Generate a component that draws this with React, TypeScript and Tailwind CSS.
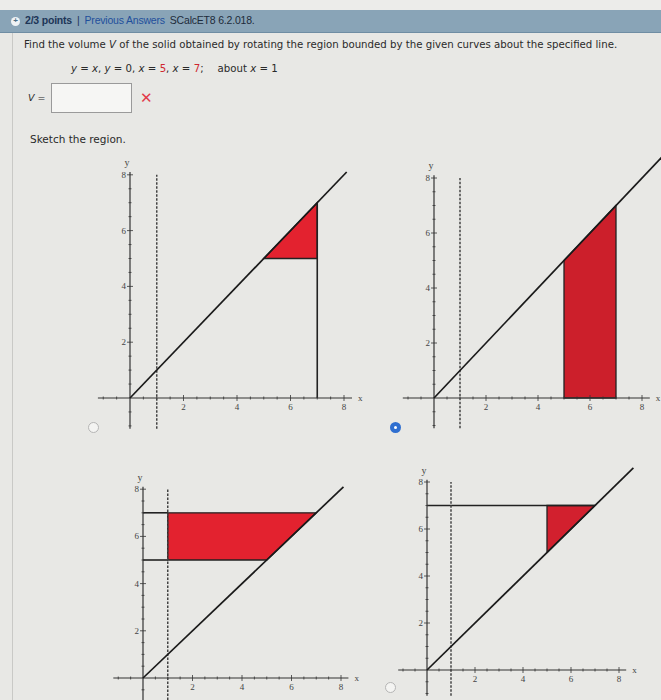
import React from 'react'

type Pt = [number, number]

interface GraphProps {
  w: number
  h: number
  ox: number
  oy: number
  ux: number
  uy: number
  xMin: number
  xMax: number
  yMin: number
  yMax: number
  lineEnd: number
  region: Pt[]
  fill?: string
  extra?: [Pt, Pt][]
}

function Graph({ w, h, ox, oy, ux, uy, xMin, xMax, yMin, yMax, lineEnd, region, fill = '#e3222f', extra = [] }: GraphProps) {
  const px = (x: number) => ox + x * ux
  const py = (y: number) => oy - y * uy
  const ticks: number[] = []
  for (let t = -1; t <= 8; t += 0.5) ticks.push(t)

  return (
    <svg width={w} height={h} className="block">
      {/* region */}
      <polygon
        points={region.map(([x, y]) => `${px(x)},${py(y)}`).join(' ')}
        fill={fill}
        stroke="#222"
        strokeWidth={1.3}
      />
      {extra.map(([a, b], i) => (
        <line key={i} x1={px(a[0])} y1={py(a[1])} x2={px(b[0])} y2={py(b[1])} stroke="#222" strokeWidth={1.6} />
      ))}

      {/* axes */}
      <line x1={px(xMin)} y1={oy} x2={px(xMax)} y2={oy} stroke="#333" strokeWidth={1.2} />
      <line x1={ox} y1={py(yMin)} x2={ox} y2={py(yMax)} stroke="#333" strokeWidth={1.2} />
      {ticks.map((t) =>
        t === 0 ? null : (
          <g key={t}>
            {t > xMin && t < xMax && (
              <line x1={px(t)} y1={oy - (t % 2 === 0 ? 3 : 1.5)} x2={px(t)} y2={oy + (t % 2 === 0 ? 3 : 1.5)} stroke="#333" strokeWidth={0.8} />
            )}
            {t > yMin && t <= yMax && (
              <line x1={ox - (t % 2 === 0 ? 3 : 1.5)} y1={py(t)} x2={ox + (t % 2 === 0 ? 3 : 1.5)} y2={py(t)} stroke="#333" strokeWidth={0.8} />
            )}
          </g>
        ),
      )}
      {[2, 4, 6, 8].map((n) => (
        <g key={n} fontFamily='"Liberation Serif", serif' fontSize={9} fill="#444">
          <text x={px(n)} y={oy + 12} textAnchor="middle">{n}</text>
          <text x={ox - 4} y={py(n) + 3} textAnchor="end">{n}</text>
        </g>
      ))}
      <text x={px(xMax) + 6} y={oy + 3} fontFamily='"Liberation Serif", serif' fontSize={9} fill="#444">x</text>
      <text x={ox - 3} y={py(yMax) - 6} fontFamily='"Liberation Serif", serif' fontSize={10} fill="#444" textAnchor="middle">y</text>

      {/* axis of rotation x = 1 */}
      <line x1={px(1)} y1={py(yMin)} x2={px(1)} y2={py(8)} stroke="#444" strokeWidth={1.5} strokeDasharray="2.5 1.5" />

      {/* y = x */}
      <line x1={ox} y1={oy} x2={px(lineEnd)} y2={py(lineEnd)} stroke="#1a1a1a" strokeWidth={1.7} />
    </svg>
  )
}

function Radio({ checked = false }: { checked?: boolean }) {
  return checked ? (
    <span className="flex h-[11px] w-[11px] items-center justify-center rounded-full bg-[#2f6fd0]">
      <span className="h-[3px] w-[3px] rounded-full bg-white" />
    </span>
  ) : (
    <span className="block h-[11px] w-[11px] rounded-full border border-[#b5b5b5] bg-[#f4f4f2]" />
  )
}

export default function App() {
  return (
    <div className="h-[700px] w-[661px] overflow-hidden bg-[#e8e8e5]" style={{ fontFamily: '"DejaVu Sans", Verdana, sans-serif' }}>
      <div className="h-[10px] bg-[#ececea]" />

      {/* header bar */}
      <div className="flex h-[23px] items-center gap-[5px] border-b border-[#6f8da3] bg-[#89a4b7] pl-[11px] text-[10.5px] tracking-[-0.2px]" style={{ fontFamily: '"Liberation Sans", Arial, sans-serif' }}>
        <span className="flex h-[9px] w-[9px] items-center justify-center rounded-full bg-[#eef2f5] text-[8px] font-bold leading-none text-[#4b6d85]">+</span>
        <span className="font-bold text-[#1d3557]">2/3 points</span>
        <span className="text-[#1d3557]">|</span>
        <span className="text-[#1f4f9c]">Previous Answers</span>
        <span className="text-[#1d2b3a]">SCalcET8 6.2.018.</span>
      </div>

      {/* content */}
      <div className="ml-[12px] h-full border-l border-[#c9c9c6] text-[#2a2a2a]">
        <p className="pl-[11px] pt-[5px] text-[10.2px] leading-[13px]">
          Find the volume <i>V</i> of the solid obtained by rotating the region bounded by the given curves about the specified line.
        </p>
        <p className="mt-[11px] pl-[58px] text-[10.2px] leading-[13px]">
          <i>y</i> = <i>x</i>, <i>y</i> = 0, <i>x</i> = <span className="text-[#d0262f]">5</span>, <i>x</i> = <span className="text-[#d0262f]">7</span>;
          <span className="ml-[14px]">about <i>x</i> = 1</span>
        </p>

        <div className="mt-[8px] flex items-center pl-[15px]">
          <span className="w-[23px] text-[9.5px]"><i>V</i> =</span>
          <span className="block h-[30px] w-[81px] border border-[#9a9a9a] bg-[#f6f6f4]" />
          <span className="ml-[8px] text-[15px] font-bold leading-none text-[#e23b4b]">✕</span>
        </div>

        <p className="mt-[20px] pl-[17px] text-[10.5px] leading-[13px]">Sketch the region.</p>

        {/* answer choices */}
        <div className="ml-[72px] mt-[6px] grid grid-cols-[295px_281px] grid-rows-[305px_245px]">
          <div className="relative">
            <Graph w={295} h={305} ox={45} oy={246} ux={26.75} uy={27.9} xMin={-1.2} xMax={8.3} yMin={-1.1} yMax={8.1} lineEnd={8.1}
              region={[[5, 5], [7, 7], [7, 5]]} extra={[[[7, 0], [7, 7]]]} />
            <div className="absolute left-[3px] top-[270px]"><Radio /></div>
          </div>
          <div className="relative">
            <Graph w={281} h={305} ox={54} oy={246} ux={26} uy={27.5} xMin={-1.2} xMax={8.3} yMin={-1.1} yMax={8.1} lineEnd={9.2}
              region={[[5, 0], [5, 5], [7, 7], [7, 0]]} fill="#cc1f2b" />
            <div className="absolute left-[10px] top-[270px]"><Radio checked /></div>
          </div>
          <div className="relative">
            <Graph w={295} h={245} ox={58} oy={221} ux={24.75} uy={23.6} xMin={-1.2} xMax={8.3} yMin={-1.1} yMax={8.1} lineEnd={8.1}
              region={[[1, 5], [5, 5], [7, 7], [1, 7]]} extra={[[[0, 5], [1, 5]], [[0, 7], [1, 7]]]} />
          </div>
          <div className="relative">
            <Graph w={281} h={245} ox={47} oy={213} ux={24} uy={23.5} xMin={-1.2} xMax={8.3} yMin={-1.1} yMax={8.1} lineEnd={8.6}
              region={[[5, 5], [5, 7], [7, 7]]} extra={[[[0, 7], [7, 7]]]} fill="#d2202e" />
            <div className="absolute left-[5px] top-[225px]"><Radio /></div>
          </div>
        </div>
      </div>
    </div>
  )
}
